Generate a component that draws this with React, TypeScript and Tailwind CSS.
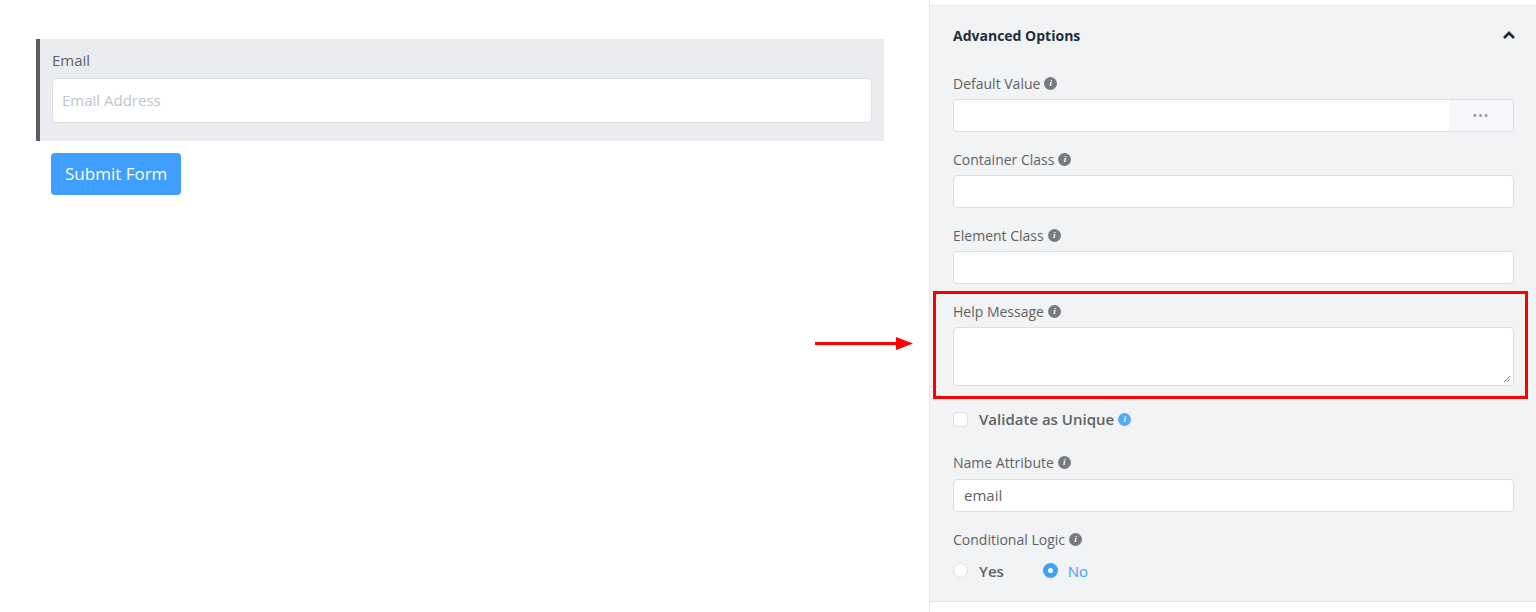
import React from "react";

function Info({ blue = false }: { blue?: boolean }) {
  return (
    <span
      className={`ml-1 inline-flex h-[13px] w-[13px] items-center justify-center rounded-full text-[9px] font-bold italic leading-none text-white ${blue ? "bg-[#53a8ff]" : "bg-[#777a80]"}`}
      style={{ fontFamily: "'Liberation Serif', serif" }}
    >
      i
    </span>
  );
}

function Label({ text }: { text: string }) {
  return (
    <div className="flex h-[18px] items-center text-[14px] text-[#606266]">
      {text}
      <Info />
    </div>
  );
}

function Input({ value = "" }: { value?: string }) {
  return (
    <div className="mt-[7px] flex h-[33px] items-center rounded border border-[#dcdfe6] bg-white px-[10px] text-[15px] text-[#606266]">
      {value}
    </div>
  );
}

export default function App() {
  return (
    <div className="relative flex h-[612px] w-[1536px] overflow-hidden bg-white" style={{ fontFamily: "'Open Sans', 'Noto Sans', sans-serif" }}>
      {/* form preview */}
      <div className="w-[929px] pl-9 pt-[39px]">
        <div className="w-[848px] border-l-4 border-[#5a5d63] bg-[#ebecf0] pb-[18px] pl-3 pr-3 pt-[10px]">
          <div className="text-[15px] text-[#606266]">Email</div>
          <div className="mt-[6px] flex h-[45px] items-center rounded border border-[#dcdfe6] bg-white px-[9px] text-[15px] text-[#c0c4cc]">
            Email Address
          </div>
        </div>
        <button className="ml-[15px] mt-3 h-[42px] rounded bg-[#409eff] px-[14px] text-[17px] text-white">
          Submit Form
        </button>
      </div>

      {/* settings panel */}
      <div className="w-[607px] border-l border-[#e4e7ed]">
        <div className="h-[6px] border-b border-[#e4e7ed] bg-white" />
        <div className="h-[596px] border-b border-[#e4e7ed] bg-[#f2f3f5] pl-[23px] pr-[22px]">
          <div className="flex h-[54px] items-center justify-between pt-1">
            <span className="text-[14px] font-bold text-[#1f2d3d]">Advanced Options</span>
            <svg width="14" height="10" viewBox="0 0 14 10" className="mr-[-2px]">
              <path d="M2 8 L7 3 L12 8" fill="none" stroke="#1f2d3d" strokeWidth="2.8" />
            </svg>
          </div>

          <div className="mt-[14px]">
            <Label text="Default Value" />
            <div className="mt-[7px] flex h-[33px] rounded border border-[#dcdfe6] bg-white">
              <div className="flex-1" />
              <div className="flex w-[64px] items-center justify-center rounded-r bg-[#f5f7fa] text-[12px] tracking-widest text-[#909399]">•••</div>
            </div>
          </div>

          <div className="mt-[18px]">
            <Label text="Container Class" />
            <Input />
          </div>
          <div className="mt-[18px]">
            <Label text="Element Class" />
            <Input />
          </div>
          <div className="mt-[18px]">
            <Label text="Help Message" />
            <div className="relative mt-[7px] h-[59px] rounded border border-[#dcdfe6] bg-white">
              <svg className="absolute bottom-[2px] right-[2px]" width="8" height="8" viewBox="0 0 8 8">
                <path d="M1 7 L7 1 M4 7 L7 4" stroke="#888" strokeWidth="1" />
              </svg>
            </div>
          </div>

          <div className="mt-[22px] flex items-center">
            <span className="h-[15px] w-[15px] rounded-sm border border-[#dcdfe6] bg-white" />
            <span className="ml-[11px] text-[15px] font-semibold text-[#606266]">Validate as Unique</span>
            <Info blue />
          </div>

          <div className="mt-[23px]">
            <Label text="Name Attribute" />
            <Input value="email" />
          </div>

          <div className="mt-[19px]">
            <Label text="Conditional Logic" />
            <div className="mt-[11px] flex items-center text-[15px]">
              <span className="h-[15px] w-[15px] rounded-full border border-[#dcdfe6] bg-white" />
              <span className="ml-[11px] font-semibold text-[#606266]">Yes</span>
              <span className="ml-[39px] flex h-[15px] w-[15px] items-center justify-center rounded-full bg-[#409eff]">
                <span className="h-[5px] w-[5px] rounded-full bg-white" />
              </span>
              <span className="ml-[10px] text-[#409eff]">No</span>
            </div>
          </div>
        </div>
      </div>

      {/* annotation */}
      <div className="absolute left-[815px] top-[342px] h-[3px] w-[85px] bg-[#ff0000]" />
      <svg className="absolute left-[896px] top-[337px]" width="17" height="13" viewBox="0 0 17 13">
        <path d="M0 0 L17 6.5 L0 13 Z" fill="#ff0000" />
      </svg>
      <div className="absolute left-[933px] top-[291px] h-[108px] w-[595px] border-[3px] border-[#ff0000]" />
    </div>
  );
}
